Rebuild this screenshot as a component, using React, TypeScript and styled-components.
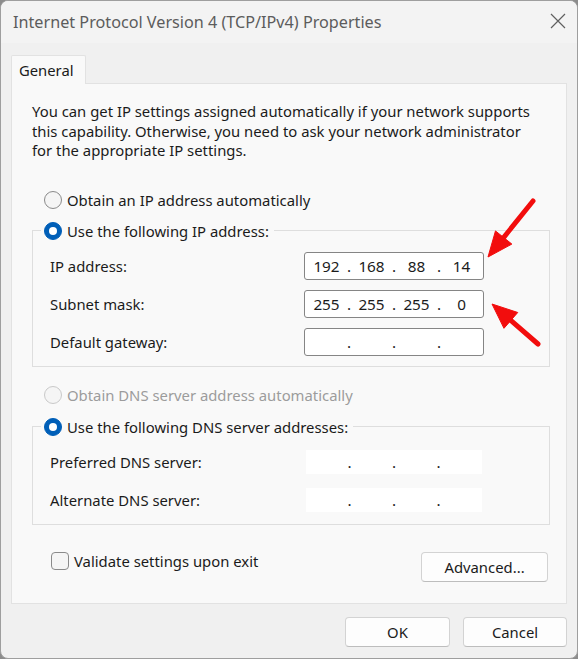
import styled, { createGlobalStyle } from 'styled-components';

const GlobalStyle = createGlobalStyle`
  html, body {
    margin: 0;
    padding: 0;
    background: #8c8c8c;
    overflow: hidden;
  }
  * {
    box-sizing: border-box;
  }
`;

const Window = styled.div`
  position: relative;
  width: 578px;
  height: 659px;
  display: flex;
  flex-direction: column;
  background: #f0f0f0;
  border: 1px solid #9e9e9e;
  border-radius: 8px;
  overflow: hidden;
  font-family: 'Noto Sans', 'Open Sans', sans-serif;
  color: #1b1b1b;
`;

const TitleBar = styled.div`
  height: 42px;
  flex: none;
  display: flex;
  align-items: center;
  justify-content: space-between;
  padding: 0 11px 0 12px;
  background: #f3f3f3;
`;

const Title = styled.span`
  font-size: 16.2px;
  color: #5c5c5c;
`;

const CloseButton = styled.span`
  display: flex;
  width: 16px;
  height: 16px;
  margin-top: -3px;
`;

const Body = styled.div`
  flex: 1;
  padding: 12px 10px 0 10px;
  display: flex;
  flex-direction: column;
`;

const Tab = styled.div`
  position: relative;
  z-index: 1;
  width: 75px;
  height: 29px;
  margin-bottom: -1px;
  padding: 4px 0 0 7px;
  font-size: 14.8px;
  background: #f9f9f9;
  border: 1px solid #e2e2e2;
  border-bottom: none;
  border-radius: 2px 2px 0 0;
`;

const Panel = styled.div`
  display: flex;
  flex-direction: column;
  padding: 18px 16px 21px 20px;
  background: #f9f9f9;
  border: 1px solid #e2e2e2;
  font-size: 14.85px;
`;

const Description = styled.p`
  margin: 0;
  line-height: 19.5px;
  white-space: pre-line;
`;

const RadioRow = styled.label<{ $disabled?: boolean; $top?: number }>`
  display: flex;
  align-items: center;
  gap: 5px;
  height: 22px;
  margin: ${({ $top }) => $top ?? 0}px 0 0 12px;
  color: ${({ $disabled }) => ($disabled ? '#9c9c9c' : 'inherit')};
`;

const RadioDot = styled.span<{ $checked?: boolean; $disabled?: boolean }>`
  position: relative;
  flex: none;
  width: 18px;
  height: 18px;
  border-radius: 50%;
  background: ${({ $checked }) => ($checked ? '#005fb8' : '#f5f5f5')};
  border: 1px solid
    ${({ $checked, $disabled }) =>
      $checked ? '#005fb8' : $disabled ? '#c9c9c9' : '#8a8a8a'};

  &::after {
    content: '';
    display: ${({ $checked }) => ($checked ? 'block' : 'none')};
    position: absolute;
    left: 4px;
    top: 4px;
    width: 8px;
    height: 8px;
    border-radius: 50%;
    background: #ffffff;
  }
`;

const Group = styled.fieldset<{ $top: number }>`
  margin: ${({ $top }) => $top}px 0 0 0;
  padding: 0;
  min-width: 0;
  border: 1px solid #dedede;
`;

const Legend = styled.legend`
  margin-left: 8px;
  padding: 0 5px 0 3px;

  ${RadioRow} {
    margin: 0;
  }
`;

const FieldGrid = styled.div`
  display: grid;
  grid-template-columns: 254px 180px;
  grid-auto-rows: 28px;
  row-gap: 10px;
  align-items: center;
  padding: 10px 0 10px 17px;
`;

const FieldLabel = styled.span``;

const IpBox = styled.div<{ $disabled?: boolean }>`
  display: flex;
  align-items: center;
  width: ${({ $disabled }) => ($disabled ? 176 : 180)}px;
  height: ${({ $disabled }) => ($disabled ? 24 : 28)}px;
  margin-left: ${({ $disabled }) => ($disabled ? 2 : 0)}px;
  padding: 0 1px;
  background: #ffffff;
  border: ${({ $disabled }) => ($disabled ? 'none' : '1px solid #858585')};
  border-radius: ${({ $disabled }) => ($disabled ? 0 : 3)}px;
  font-size: 15.3px;
`;

const Octet = styled.span`
  flex: 1;
  text-align: center;
`;

const Dot = styled.span`
  flex: none;
  width: 4px;
  text-align: center;
`;

const BottomRow = styled.div`
  display: flex;
  justify-content: space-between;
  align-items: flex-start;
  margin-top: 27px;
  padding: 0 2px 0 19px;
`;

const CheckRow = styled.label`
  display: flex;
  align-items: center;
  gap: 5px;
  height: 20px;
  margin-top: -1px;
`;

const CheckBox = styled.span`
  flex: none;
  width: 18px;
  height: 18px;
  border-radius: 4px;
  background: #f5f5f5;
  border: 1px solid #8a8a8a;
`;

const Button = styled.button<{ $width: number }>`
  width: ${({ $width }) => $width}px;
  height: 30px;
  padding: 0;
  font-family: inherit;
  font-size: 14.85px;
  color: #1b1b1b;
  background: #fdfdfd;
  border: 1px solid #d3d3d3;
  border-bottom-color: #bdbdbd;
  border-radius: 4px;
`;

const Footer = styled.div`
  display: flex;
  justify-content: flex-end;
  gap: 13px;
  padding: 13px 0 0 0;
`;

const Annotation = styled.svg`
  position: absolute;
  left: 470px;
  top: 190px;
  width: 80px;
  height: 170px;
  pointer-events: none;
`;

type Pt = [number, number];

const Arrow = ({ tail, tip }: { tail: Pt; tip: Pt }) => {
  const dx = tail[0] - tip[0];
  const dy = tail[1] - tip[1];
  const len = Math.hypot(dx, dy);
  const ux = dx / len;
  const uy = dy / len;
  const headLen = 25;
  const half = 10.5;
  const bx = tip[0] + ux * headLen;
  const by = tip[1] + uy * headLen;
  const px = -uy * half;
  const py = ux * half;
  return (
    <g fill="#f20d0d" stroke="#f20d0d">
      <line x1={tail[0]} y1={tail[1]} x2={bx - ux * 2} y2={by - uy * 2} strokeWidth={5} strokeLinecap="round" />
      <polygon
        points={`${tip[0]},${tip[1]} ${bx + px},${by + py} ${bx - px},${by - py}`}
        strokeWidth={1}
        strokeLinejoin="round"
      />
    </g>
  );
};

const IpField = ({ octets, disabled }: { octets: string[]; disabled?: boolean }) => (
  <IpBox $disabled={disabled}>
    {octets.flatMap((o, i) => [
      i > 0 ? <Dot key={`d${i}`}>.</Dot> : null,
      <Octet key={`o${i}`}>{o}</Octet>,
    ])}
  </IpBox>
);

const empty = ['', '', '', ''];

export default function App() {
  return (
    <>
      <GlobalStyle />
      <Window>
        <TitleBar>
          <Title>Internet Protocol Version 4 (TCP/IPv4) Properties</Title>
          <CloseButton>
            <svg width="16" height="16" viewBox="0 0 16 16">
              <path d="M1 1 L15 15 M15 1 L1 15" stroke="#5f5f5f" strokeWidth="1.2" fill="none" />
            </svg>
          </CloseButton>
        </TitleBar>

        <Body>
          <Tab>General</Tab>
          <Panel>
            <Description>
              {'You can get IP settings assigned automatically if your network supports\nthis capability. Otherwise, you need to ask your network administrator\nfor the appropriate IP settings.'}
            </Description>

            <RadioRow $top={28}>
              <RadioDot />
              Obtain an IP address automatically
            </RadioRow>

            <Group $top={9}>
              <Legend>
                <RadioRow>
                  <RadioDot $checked />
                  Use the following IP address:
                </RadioRow>
              </Legend>
              <FieldGrid>
                <FieldLabel>IP address:</FieldLabel>
                <IpField octets={['192', '168', '88', '14']} />
                <FieldLabel>Subnet mask:</FieldLabel>
                <IpField octets={['255', '255', '255', '0']} />
                <FieldLabel>Default gateway:</FieldLabel>
                <IpField octets={empty} />
              </FieldGrid>
            </Group>

            <RadioRow $top={17} $disabled>
              <RadioDot $disabled />
              Obtain DNS server address automatically
            </RadioRow>

            <Group $top={10}>
              <Legend>
                <RadioRow>
                  <RadioDot $checked />
                  Use the following DNS server addresses:
                </RadioRow>
              </Legend>
              <FieldGrid>
                <FieldLabel>Preferred DNS server:</FieldLabel>
                <IpField octets={empty} disabled />
                <FieldLabel>Alternate DNS server:</FieldLabel>
                <IpField octets={empty} disabled />
              </FieldGrid>
            </Group>

            <BottomRow>
              <CheckRow>
                <CheckBox />
                Validate settings upon exit
              </CheckRow>
              <Button $width={127}>Advanced...</Button>
            </BottomRow>
          </Panel>

          <Footer>
            <Button $width={105}>OK</Button>
            <Button $width={104}>Cancel</Button>
          </Footer>
        </Body>

        <Annotation viewBox="470 190 80 170">
          <Arrow tail={[532, 200]} tip={[487, 256]} />
          <Arrow tail={[537, 343]} tip={[491, 303]} />
        </Annotation>
      </Window>
    </>
  );
}
